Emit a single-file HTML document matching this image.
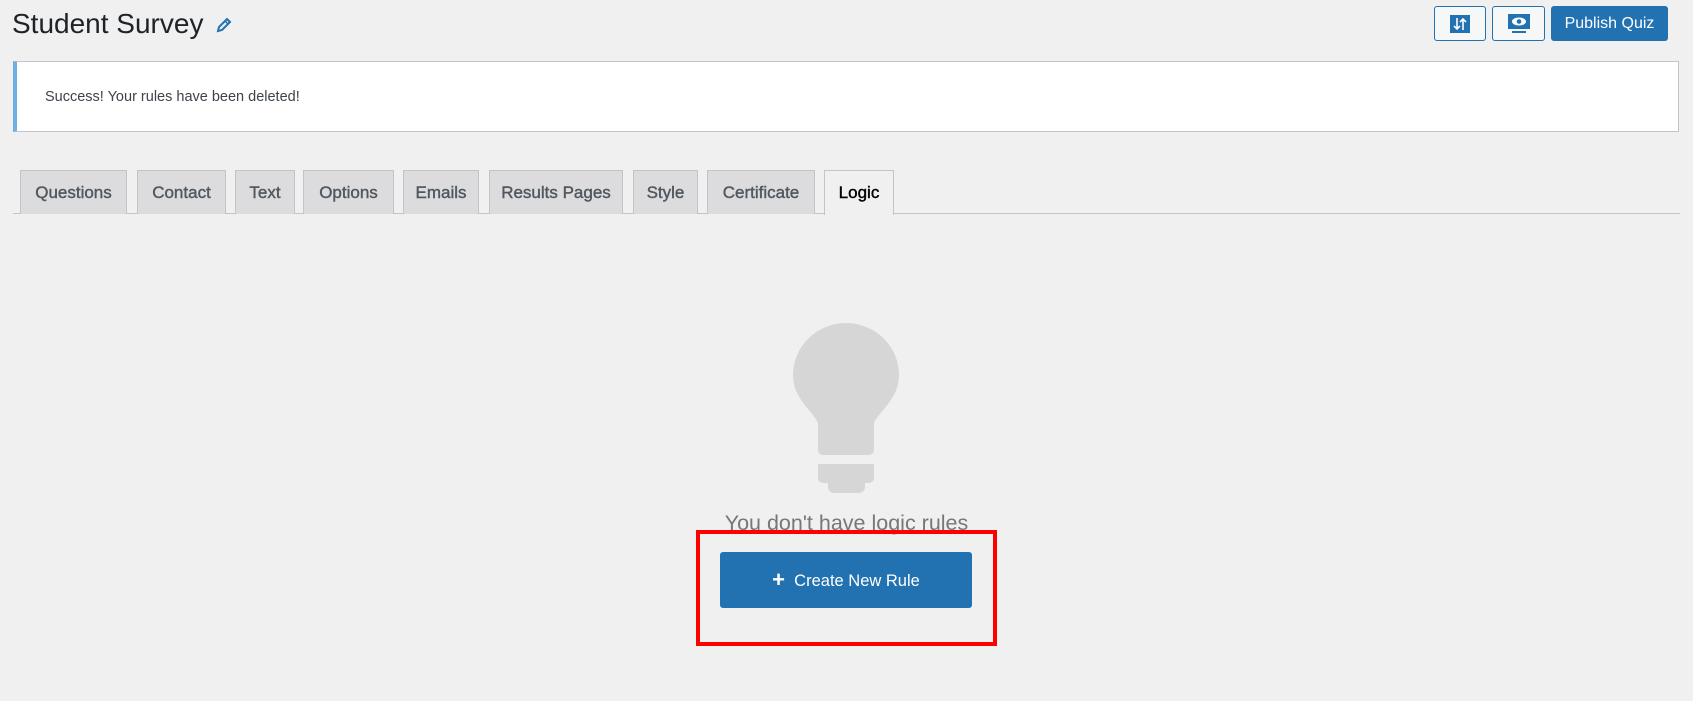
<!DOCTYPE html>
<html><head><style>
body{margin:0;width:1693px;height:701px;background:#f0f0f1;font-family:"Liberation Sans",sans-serif;position:relative;overflow:hidden;color:#1d2327}
.a{position:absolute}
h1{position:absolute;left:12px;top:8px;margin:0;font-weight:400;font-size:28px;color:#1d2327}
.btn{position:absolute;top:6px;height:35px;border:1px solid #2271b1;border-radius:3px;background:#f6f7f7;box-sizing:border-box}
.notice{left:13px;top:61px;width:1666px;height:71px;background:#fff;border:1px solid #c3c4c7;border-left:4px solid #72aee6;box-sizing:border-box}
.tab{position:absolute;top:170px;height:44px;box-sizing:border-box;background:#dcdcde;border:1px solid #c3c4c7;border-bottom:none;font-size:17px;color:#50575e;text-align:center;line-height:44px;-webkit-text-stroke:0.4px #50575e}
</style></head><body>
<h1>Student Survey</h1>
<svg class="a" style="left:215px;top:16px" width="18" height="18" viewBox="0 0 18 18"><path d="M3 15 L4 11 L12 3 L15 6 L7 14 Z" fill="none" stroke="#2271b1" stroke-width="2"/><path d="M10 5 L13 8" stroke="#2271b1" stroke-width="1.5"/></svg>
<div class="btn" style="left:1434px;width:52px"><svg class="a" style="left:15px;top:8px" width="20" height="18"><rect width="20" height="18" fill="#2271b1"/><path d="M7 3v11M4 11l3 3 3-3M13 15V4M10 7l3-3 3 3" stroke="#fff" stroke-width="1.6" fill="none"/></svg></div>
<div class="btn" style="left:1492px;width:53px"><svg class="a" style="left:15px;top:7px" width="22" height="20"><rect width="22" height="15" fill="#2271b1"/><ellipse cx="11" cy="7.5" rx="7" ry="4" fill="#fff"/><circle cx="11" cy="7.5" r="2.3" fill="#2271b1"/><rect x="4" y="17" width="14" height="2" fill="#2271b1"/></svg></div>
<div class="btn" style="left:1551px;width:117px;background:#2271b1;color:#fff;font-size:16px;text-align:center;line-height:33px">Publish Quiz</div>
<div class="a notice"><div class="a" style="left:28px;top:27px;font-size:14.5px;color:#3c434a">Success! Your rules have been deleted!</div></div>
<div class="a" style="left:13px;top:213px;width:1667px;height:1px;background:#c3c4c7"></div>
<div class="tab" style="left:20px;width:107px">Questions</div>
<div class="tab" style="left:137px;width:89px">Contact</div>
<div class="tab" style="left:235px;width:60px">Text</div>
<div class="tab" style="left:303px;width:91px">Options</div>
<div class="tab" style="left:403px;width:76px">Emails</div>
<div class="tab" style="left:489px;width:134px">Results Pages</div>
<div class="tab" style="left:633px;width:65px">Style</div>
<div class="tab" style="left:707px;width:108px">Certificate</div>
<div class="tab" style="left:824px;width:70px;background:#f0f0f1;color:#000;height:45px;-webkit-text-stroke:0.4px #000">Logic</div>
<svg class="a" style="left:793px;top:323px" width="107" height="172" viewBox="0 0 107 172"><path d="M25 126 L25 100 C20 88 0 76 0 52 A53 52 0 0 1 106 52 C106 76 86 88 81 100 L81 126 Q81 132 75 132 L31 132 Q25 132 25 126 Z" fill="#d6d6d6"/><path d="M25 141 H81 V154 Q81 160 75 160 H72 V163 Q72 170 65 170 H42 Q35 170 35 163 V160 H31 Q25 160 25 154 Z" fill="#d6d6d6"/></svg>
<div class="a" style="left:600px;width:493px;top:511px;text-align:center;font-size:21.5px;color:#777">You don't have logic rules</div>
<div class="a" style="left:696px;top:530px;width:301px;height:116px;border:4px solid #f00;box-sizing:border-box"></div>
<div class="a" style="left:720px;top:552px;width:252px;height:56px;background:#2271b1;border-radius:3px;color:#fff;font-size:16.5px;text-align:center;line-height:56px"><b style="font-size:22px;vertical-align:-1px">+</b>&nbsp; Create New Rule</div>
</body></html>
